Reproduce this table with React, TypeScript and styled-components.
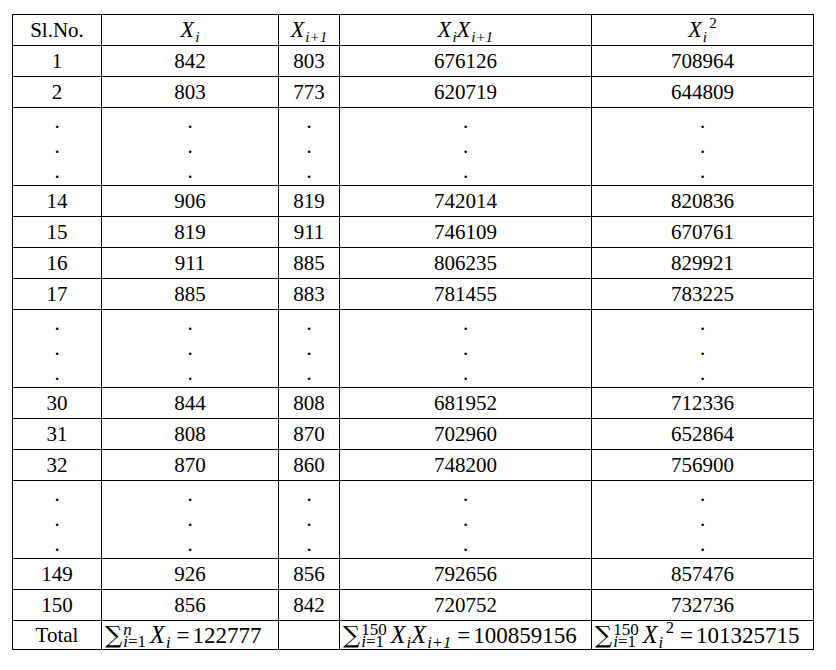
import React from "react";
import styled, { createGlobalStyle } from "styled-components";

type RowKind = "header" | "normal" | "dots" | "total";

type DataRow = {
  no: string;
  x: string;
  next: string;
  prod: string;
  sq: string;
};

const rowHeights: Record<RowKind, number> = {
  header: 31,
  normal: 31,
  dots: 78,
  total: 29,
};

const GlobalStyle = createGlobalStyle`
  html, body {
    margin: 0;
    padding: 0;
    background: #ffffff;
  }
`;

const Page = styled.div`
  padding: 14px 0 0 12px;
`;

const Table = styled.table`
  border-collapse: collapse;
  table-layout: fixed;
  width: 801px;
  font-family: "Liberation Serif", "Times New Roman", serif;
  font-size: 21px;
  color: #000;
`;

const Row = styled.tr<{ $kind: RowKind }>`
  height: ${({ $kind }) => rowHeights[$kind]}px;
`;

const Cell = styled.td<{ $align?: "left" | "center"; $dots?: boolean }>`
  border: 1px solid #000;
  padding: ${({ $align, $dots }) =>
    $align === "left" ? "0 0 0 3px" : $dots ? "1px 0 0" : "0"};
  text-align: ${({ $align }) => $align ?? "center"};
  vertical-align: ${({ $dots }) => ($dots ? "top" : "middle")};
  line-height: ${({ $dots }) => ($dots ? "25px" : "23px")};
  white-space: nowrap;
  overflow: hidden;
`;

const TotalCell = styled(Cell)`
  font-size: 23px;
  line-height: 14px;
  padding-top: 2px;
  overflow: visible;
`;

const Dot = styled.div`
  height: 25px;
`;

const Math = styled.span`
  font-family: "Liberation Serif", "DejaVu Serif", serif;
  white-space: nowrap;
`;

const Var = styled.i`
  font-style: italic;
  font-size: 1.05em;
  letter-spacing: 0.05em;
`;

const Sub = styled.sub`
  font-style: italic;
  font-size: 0.72em;
  vertical-align: -0.33em;
  line-height: 0;
`;

const Sup = styled.sup`
  font-size: 0.72em;
  vertical-align: 0.62em;
  line-height: 0;
  margin-left: 0.15em;
`;

const SumSign = styled.span`
  font-family: "DejaVu Serif", serif;
  font-size: 24px;
`;

const Limits = styled.span`
  display: inline-flex;
  flex-direction: column;
  vertical-align: 8px;
  margin: 0 4px 0 1px;
  font-size: 17px;
  line-height: 12px;
  text-align: left;
`;

const Limit = styled.span<{ $italic?: boolean }>`
  font-style: ${({ $italic }) => ($italic ? "italic" : "normal")};
`;

const Equals = styled.span`
  margin: 0 3px 0 6px;
`;

const Sum = ({ top, italicTop, children }: { top: string; italicTop?: boolean; children: React.ReactNode }) => (
  <Math>
    <SumSign>∑</SumSign>
    <Limits>
      <Limit $italic={italicTop}>{top}</Limit>
      <Limit>
        <i>i</i>=1
      </Limit>
    </Limits>
    {children}
  </Math>
);

const Xi = () => (
  <>
    <Var>X</Var>
    <Sub>i</Sub>
  </>
);

const XiNext = () => (
  <>
    <Var>X</Var>
    <Sub>i+1</Sub>
  </>
);

const blocks: DataRow[][] = [
  [
    { no: "1", x: "842", next: "803", prod: "676126", sq: "708964" },
    { no: "2", x: "803", next: "773", prod: "620719", sq: "644809" },
  ],
  [
    { no: "14", x: "906", next: "819", prod: "742014", sq: "820836" },
    { no: "15", x: "819", next: "911", prod: "746109", sq: "670761" },
    { no: "16", x: "911", next: "885", prod: "806235", sq: "829921" },
    { no: "17", x: "885", next: "883", prod: "781455", sq: "783225" },
  ],
  [
    { no: "30", x: "844", next: "808", prod: "681952", sq: "712336" },
    { no: "31", x: "808", next: "870", prod: "702960", sq: "652864" },
    { no: "32", x: "870", next: "860", prod: "748200", sq: "756900" },
  ],
  [
    { no: "149", x: "926", next: "856", prod: "792656", sq: "857476" },
    { no: "150", x: "856", next: "842", prod: "720752", sq: "732736" },
  ],
];

const DotsRow = () => (
  <Row $kind="dots">
    {[0, 1, 2, 3, 4].map((i) => (
      <Cell key={i} $dots>
        <Dot>.</Dot>
        <Dot>.</Dot>
        <Dot>.</Dot>
      </Cell>
    ))}
  </Row>
);

export default function App() {
  return (
    <Page>
      <GlobalStyle />
      <Table>
        <colgroup>
          <col style={{ width: 89 }} />
          <col style={{ width: 177 }} />
          <col style={{ width: 61 }} />
          <col style={{ width: 252 }} />
          <col style={{ width: 222 }} />
        </colgroup>
        <thead>
          <Row $kind="header">
            <Cell>Sl.No.</Cell>
            <Cell>
              <Math>
                <Xi />
              </Math>
            </Cell>
            <Cell>
              <Math>
                <XiNext />
              </Math>
            </Cell>
            <Cell>
              <Math>
                <Xi />
                <XiNext />
              </Math>
            </Cell>
            <Cell>
              <Math>
                <Xi />
                <Sup>2</Sup>
              </Math>
            </Cell>
          </Row>
        </thead>
        <tbody>
          {blocks.map((block, bi) => (
            <React.Fragment key={bi}>
              {bi > 0 && <DotsRow />}
              {block.map((r) => (
                <Row $kind="normal" key={r.no}>
                  <Cell>{r.no}</Cell>
                  <Cell>{r.x}</Cell>
                  <Cell>{r.next}</Cell>
                  <Cell>{r.prod}</Cell>
                  <Cell>{r.sq}</Cell>
                </Row>
              ))}
            </React.Fragment>
          ))}
          <Row $kind="total">
            <Cell>Total</Cell>
            <TotalCell $align="left">
              <Sum top="n" italicTop>
                <Xi />
              </Sum>
              <Equals>=</Equals>122777
            </TotalCell>
            <Cell />
            <TotalCell $align="left">
              <Sum top="150">
                <Xi />
                <XiNext />
              </Sum>
              <Equals>=</Equals>100859156
            </TotalCell>
            <TotalCell $align="left">
              <Sum top="150">
                <Xi />
                <Sup>2</Sup>
              </Sum>
              <Equals>=</Equals>101325715
            </TotalCell>
          </Row>
        </tbody>
      </Table>
    </Page>
  );
}
